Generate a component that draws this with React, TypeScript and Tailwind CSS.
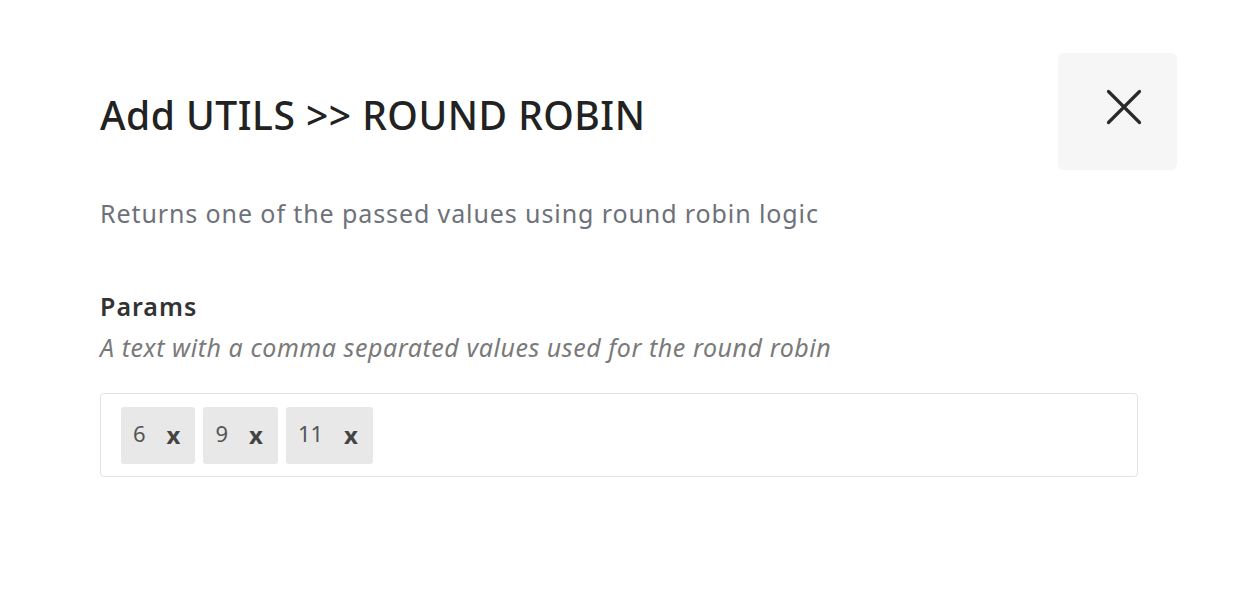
import React, { useState } from 'react';

const font = { fontFamily: '"Noto Sans", "Open Sans", sans-serif' };

const CloseIcon = () => (
  <svg width="36" height="36" viewBox="0 0 36 36" fill="none">
    <path d="M2.5 2.5L33.5 33.5M33.5 2.5L2.5 33.5" stroke="#2a2a2a" strokeWidth="3.2" strokeLinecap="round" />
  </svg>
);

const Chip = ({ label, onRemove }: { label: string; onRemove: () => void }) => (
  <div className="flex h-[57px] items-center rounded-[3px] bg-[#e8e8e8] pl-[12px] pr-[15px]">
    <span className="text-[22px] leading-none text-[#555] -mt-[4px]">{label}</span>
    <button
      onClick={onRemove}
      className="ml-[21px] text-[24px] font-bold leading-none text-[#444]"
    >
      x
    </button>
  </div>
);

const App = () => {
  const [values, setValues] = useState(['6', '9', '11']);

  return (
    <div className="min-h-[596px] bg-white pt-[53px] pl-[100px] pr-[71px]" style={font}>
      <div className="flex items-start justify-between">
        <h1 className="mt-[37px] text-[39px] font-medium leading-[49px] tracking-[0.5px] text-[#222]">
          Add UTILS &gt;&gt; ROUND ROBIN
        </h1>
        <button className="flex h-[117px] w-[119px] items-center justify-center rounded-[6px] bg-[#f6f6f6] pl-[12px] pb-[9px]">
          <CloseIcon />
        </button>
      </div>

      <p className="mt-[27px] text-[25px] leading-[32px] tracking-[0.9px] text-[#6e717a]">
        Returns one of the passed values using round robin logic
      </p>

      <div className="mt-[61px]">
        <div className="text-[25px] font-semibold leading-[32px] tracking-[1px] text-[#333]">Params</div>
        <div className="mt-[9px] text-[25px] italic leading-[32px] tracking-[0.55px] text-[#7a7a7a]">
          A text with a comma separated values used for the round robin
        </div>
      </div>

      <div className="mt-[30px] mr-[39px] flex h-[84px] items-center gap-[8px] rounded-[4px] border border-[#e3e3e3] px-[20px]">
        {values.map((v) => (
          <Chip key={v} label={v} onRemove={() => setValues(values.filter((x) => x !== v))} />
        ))}
      </div>
    </div>
  );
};

export default App;
